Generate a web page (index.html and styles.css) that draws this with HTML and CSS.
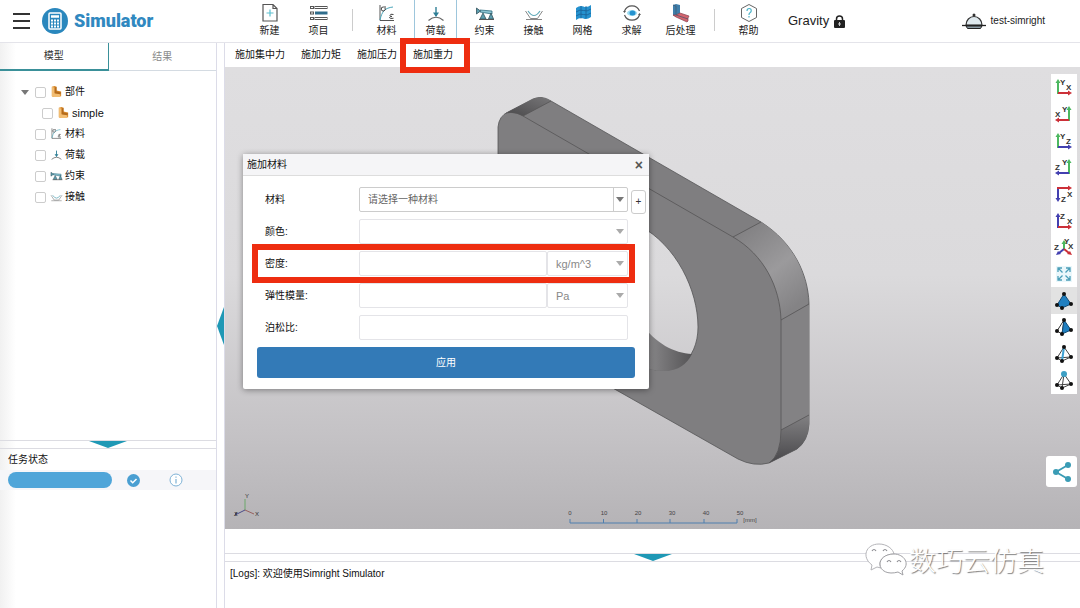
FILE: index.html
```html
<!DOCTYPE html>
<html lang="zh-CN">
<head>
    <meta charset="UTF-8">
    <meta name="viewport" content="width=device-width, initial-scale=1.0">
    <title>Simulator</title>
    <link rel="stylesheet" href="styles.css">
</head>
<body>
    <!-- shared icons -->
    <svg class="defs" width="0" height="0" aria-hidden="true">
        <symbol id="i-material" viewBox="0 0 20 20">
            <path d="M3 2v15.500h14" fill="none" stroke="#555" stroke-width="1"/>
            <path d="M3 17C5 8 8 5 16 4" fill="none" stroke="#4aa6ba" stroke-width="1"/>
            <path d="M9 4h-2.500a2 2 0 1 0 1.500 1M16.500 11.500q-3.500-1-3.500 1 0 1 2 1-2.500 0-2.500 1.200 0 1.500 4 .5" fill="none" stroke="#444" stroke-width="1"/>
        </symbol>
        <symbol id="i-load" viewBox="0 0 20 20">
            <path d="M2.500 17.500Q10 11 17.500 17.500" fill="none" stroke="#666" stroke-width="1.200"/>
            <path d="M10 4v9" stroke="#2f7f96" stroke-width="1.400"/>
            <path d="M7 9.500h6L10 14z" fill="#2f7f96"/>
        </symbol>
        <symbol id="i-fix" viewBox="0 0 20 20">
            <path d="M5 7l12 1v3L5 9z" fill="#8cc4d2" stroke="#2f6d80" stroke-width=".8"/>
            <path d="M1.500 5v6l4-3zM8 10l-3 6h6zM16 10l-2.500 6h5z" fill="#5c9fb0" stroke="#33525c" stroke-width=".8"/>
            <path d="M4 16.500h15" stroke="#555"/>
        </symbol>
        <symbol id="i-contact" viewBox="0 0 20 20">
            <path d="M4 8q6 9 12 0" fill="none" stroke="#5fa9b8" stroke-width="1.200"/>
            <path d="M1.500 8l5 7.500h7l5-7.500M2 16.500h16" fill="none" stroke="#888" stroke-width="1"/>
        </symbol>
        <symbol id="i-part" viewBox="0 0 14 14">
            <path d="M2 2l3-1 2 1v4l5 1v5l-8 1-2-1z" fill="#d98a2b"/>
            <path d="M2 2l3 1v6l6 1v3H4l-2-1z" fill="#f2bd72"/>
            <path d="M5 3l2-1v5l5 1-1 2-6-1z" fill="#b36b1d"/>
        </symbol>
    </svg>

    <header class="header">
        <button class="menu-btn" aria-label="菜单"><span></span><span></span><span></span></button>
        <a class="logo" href="#">
            <svg width="26" height="26" viewBox="0 0 26 26">
                <circle cx="13" cy="13" r="13" fill="#2a87bd"/>
                <rect x="7" y="5" width="12" height="16" rx="1" fill="#2a87bd" stroke="#fff" stroke-width="1.500"/>
                <path d="M9 8.500h8" stroke="#fff" stroke-width="2.500"/>
                <path d="M9 12.500h2m1 0h2m1 0h2M9 15.500h2m1 0h2m1 0h2M9 18.500h2m1 0h2m1 0h2" stroke="#fff" stroke-width="1.800"/>
            </svg>
            <span>Simulator</span>
        </a>
        <nav class="toolbar">
            <button class="tool">
                <svg width="20" height="20" viewBox="0 0 20 20"><path d="M3 1.500h10l4 4v12.500H3zM13 1.500v4h4" fill="#fff" stroke="#555" stroke-width="1.200"/><path d="M10 6.500v7M6.500 10h7" stroke="#5cc0d0" stroke-width="1.200"/></svg>
                <span>新建</span>
            </button>
            <button class="tool">
                <svg width="20" height="20" viewBox="0 0 20 20"><g fill="#fff" stroke="#555"><rect x="1.500" y="3.500" width="3" height="2"/><rect x="1.500" y="9" width="3" height="2"/><rect x="1.500" y="14.500" width="3" height="2"/><rect x="6" y="3.500" width="12" height="2"/><rect x="6" y="14.500" width="12" height="2"/></g><path d="M6 10h12.500" stroke="#2f6d8c" stroke-width="3"/></svg>
                <span>项目</span>
            </button>
            <i class="sep"></i>
            <button class="tool"><svg width="20" height="20"><use href="#i-material"/></svg><span>材料</span></button>
            <button class="tool active"><svg width="20" height="20"><use href="#i-load"/></svg><span>荷载</span></button>
            <button class="tool"><svg width="20" height="20"><use href="#i-fix"/></svg><span>约束</span></button>
            <button class="tool"><svg width="20" height="20"><use href="#i-contact"/></svg><span>接触</span></button>
            <button class="tool">
                <svg width="20" height="20" viewBox="0 0 20 20"><path d="M3 5q4-3 7.500-1.500T18 2v12q-4 3-7.500 1.500T3 17z" fill="#2592cf"/><path d="M3 9q4-3 7.500-1.500T18 6M3 13q4-3 7.500-1.500T18 10M8 3v12.500M13 3v12.500" fill="none" stroke="#1a5f94" stroke-width=".8"/></svg>
                <span>网格</span>
            </button>
            <button class="tool">
                <svg width="20" height="20" viewBox="0 0 20 20"><path d="M2.500 8a8 8 0 0 1 15 0M17.500 12a8 8 0 0 1-15 0" fill="none" stroke="#555" stroke-width="1.200"/><path d="M1 8h3l-1.500 2zM19 12h-3l1.500-2z" fill="#555"/><ellipse cx="10" cy="10" rx="5" ry="3" fill="#9fdcf0"/><ellipse cx="10.500" cy="10" rx="3" ry="2.500" fill="#2592cf"/></svg>
                <span>求解</span>
            </button>
            <button class="tool">
                <svg width="20" height="20" viewBox="0 0 20 20"><path d="M2 2l3-1 4 1v9l-4 3-3-2z" fill="#3f7fab"/><path d="M2 12l3 2 11 5 1-1v-3l1-2-9-3-4 2z" fill="#d2646e" stroke="#8b4450" stroke-width=".7"/><path d="M2 2l3 1v9l12 4" fill="none" stroke="#44566b" stroke-width=".7"/></svg>
                <span>后处理</span>
            </button>
            <i class="sep"></i>
            <button class="tool">
                <svg width="20" height="20" viewBox="0 0 20 20"><path d="M10 1.500l7.500 4v9l-7.500 4-7.500-4v-9z" fill="#fff" stroke="#666" stroke-width="1"/><path d="M8 8q0-2.500 2.200-2.500T12.200 8q0 1-1.200 1.700T10 12M10 13v1.500" fill="none" stroke="#4db3c8" stroke-width="1.200"/></svg>
                <span>帮助</span>
            </button>
        </nav>
        <div class="project">
            <span>Gravity</span>
            <svg width="11" height="13" viewBox="0 0 11 13"><path d="M2.500 6V4a3 3 0 0 1 6 0v2" fill="none" stroke="#222" stroke-width="1.500"/><rect x="0" y="5" width="11" height="8" rx="1" fill="#222"/><path d="M5.500 7v4M4 9h3" stroke="#ccc"/></svg>
        </div>
        <a class="user" href="#">
            <svg width="24" height="18" viewBox="0 0 24 18"><path d="M4 13a8 8.500 0 0 1 16 0z" fill="#dfe9ee" stroke="#333" stroke-width="1.200"/><circle cx="12" cy="3" r="1.500" fill="#333"/><path d="M0 13.500h24" stroke="#222" stroke-width="1.300"/><path d="M4 14h16l-1.500 2.500h-13z" fill="#8a9aa3" stroke="#222"/></svg>
            <span>test-simright</span>
        </a>
    </header>

    <div class="layout">
        <aside class="sidebar">
            <div class="tabs">
                <button class="tab current">模型</button>
                <button class="tab">结果</button>
            </div>
            <ul class="tree">
                <li><span class="caret"></span><input type="checkbox" id="t1"><label for="t1"><svg width="13" height="13"><use href="#i-part"/></svg>部件</label></li>
                <li class="child"><input type="checkbox" id="t2"><label for="t2"><svg width="13" height="13"><use href="#i-part"/></svg><span class="latin">simple</span></label></li>
                <li><input type="checkbox" id="t3"><label for="t3"><svg width="13" height="13"><use href="#i-material"/></svg>材料</label></li>
                <li><input type="checkbox" id="t4"><label for="t4"><svg width="13" height="13"><use href="#i-load"/></svg>荷载</label></li>
                <li><input type="checkbox" id="t5"><label for="t5"><svg width="13" height="13"><use href="#i-fix"/></svg>约束</label></li>
                <li><input type="checkbox" id="t6"><label for="t6"><svg width="13" height="13"><use href="#i-contact"/></svg>接触</label></li>
            </ul>
            <div class="h-split"><i></i></div>
            <section class="status">
                <h2>任务状态</h2>
                <div class="task">
                    <div class="bar"></div>
                    <svg width="13" height="13" viewBox="0 0 13 13"><circle cx="6.500" cy="6.500" r="6.500" fill="#4a9fd2"/><path d="M3.500 6.500l2.200 2.200L9.500 5" fill="none" stroke="#fff" stroke-width="1.500"/></svg>
                    <svg class="info" width="14" height="14" viewBox="0 0 14 14"><circle cx="7" cy="7" r="6" fill="#fff" stroke="#7fb2d6"/><path d="M7 6v4.500M7 3.500v1.300" stroke="#7fb2d6" stroke-width="1.200"/></svg>
                </div>
            </section>
        </aside>

        <div class="v-split"><i></i></div>

        <main class="main">
            <div class="subbar">
                <button>施加集中力</button>
                <button>施加力矩</button>
                <button>施加压力</button>
                <button class="marked">施加重力</button>
            </div>

            <div class="viewport">
                <svg class="scene" viewBox="225 67 855 462">
                    <defs>
                        <linearGradient id="round" x1="0" y1="0" x2="0.600" y2="1">
                            <stop offset="0" stop-color="#7c7b7d"/>
                            <stop offset=".6" stop-color="#9b9a9c"/>
                            <stop offset="1" stop-color="#848385"/>
                        </linearGradient>
                        <linearGradient id="corner" x1="0" y1="0" x2="0" y2="1">
                            <stop offset="0" stop-color="#828183"/>
                            <stop offset="1" stop-color="#48474a"/>
                        </linearGradient>
                        <linearGradient id="tip" x1="0" y1="1" x2="1" y2="0">
                            <stop offset="0" stop-color="#4b4a4c"/>
                            <stop offset="1" stop-color="#777678"/>
                        </linearGradient>
                        <linearGradient id="bore" x1="0" y1="0" x2="1" y2="0">
                            <stop offset="0" stop-color="#929193"/>
                            <stop offset="1" stop-color="#555456"/>
                        </linearGradient>
                    </defs>
                    <!-- plate: silhouette, then the shaded side faces -->
                    <path fill="#7f7e80" fill-rule="evenodd" stroke="#565557" stroke-width=".8" d="M498 200V127Q499 116 508 112L533 99Q542 95 551 101L761 222C794 243 808 275 809 303V424Q808 441 797 449L769 463Q754 467 738 459L498 323zM640 226C676 245 698 290 698 327C698 360 674 381 640 365z"/>
                    <path fill="url(#tip)" d="M508 112L533 99Q542 95 551 101L523 116Q515 112 508 113z"/>
                    <path fill="url(#round)" d="M733 237L761 222C794 243 808 275 808 304L781 320C780 287 764 255 733 237z"/>
                    <path fill="#838284" d="M781 320l28-16v111l-28 15z"/>
                    <path fill="url(#corner)" d="M781 430l28-15v10q-1 16-12 24l-28 14q12-8 12-33z"/>
                    <path fill="url(#bore)" d="M640 322C656 344 674 353 692 354Q684 370 666 371Q650 371 640 365z"/>
                    <path fill="none" stroke="#555456" stroke-width=".8" d="M506 113Q515 111 523 116L733 237C764 255 780 287 781 320V430Q781 455 769 463M523 116L551 101M733 237L761 222M781 320L809 304M781 430L809 415"/>
                    <!-- axis triad -->
                    <g class="triad" fill="none" stroke-width="1">
                        <path d="M245 510V499" stroke="#6aa86a"/>
                        <path d="M245 510l-8 4" stroke="#4a4a88"/>
                        <path d="M245 510l9 4" stroke="#98605e"/>
                        <circle cx="236" cy="514" r="1" fill="#22225a"/>
                        <text x="245" y="498">Y</text>
                        <text x="255" y="516">X</text>
                        <text x="234" y="516">Z</text>
                    </g>
                    <!-- ruler -->
                    <path d="M570 519v4h167v-4M603.500 519v4M637 519v4M670 519v4M704 519v4" fill="none" stroke="#4f7fae" stroke-width="1"/>
                    <g class="ruler">
                        <text x="570" y="515">0</text>
                        <text x="604" y="515">10</text>
                        <text x="638" y="515">20</text>
                        <text x="672" y="515">30</text>
                        <text x="706" y="515">40</text>
                        <text x="740" y="515">50</text>
                        <text x="750" y="522">[mm]</text>
                    </g>
                </svg>

                <form class="dialog">
                    <div class="dialog-title"><span>施加材料</span><button type="button" aria-label="关闭">×</button></div>
                    <div class="dialog-body">
                        <div class="row">
                            <label for="material">材料</label>
                            <div class="select split"><select id="material"><option>请选择一种材料</option></select></div>
                            <button type="button" class="plus" aria-label="添加">+</button>
                        </div>
                        <div class="row off">
                            <label for="color">颜色:</label>
                            <div class="select"><select id="color"><option></option></select></div>
                        </div>
                        <div class="row off marked">
                            <label for="density">密度:</label>
                            <div class="pair">
                                <input type="text" id="density">
                                <div class="select"><select aria-label="密度单位"><option>kg/m^3</option></select></div>
                            </div>
                        </div>
                        <div class="row off">
                            <label for="modulus">弹性模量:</label>
                            <div class="pair">
                                <input type="text" id="modulus">
                                <div class="select"><select aria-label="弹性模量单位"><option>Pa</option></select></div>
                            </div>
                        </div>
                        <div class="row off">
                            <label for="poisson">泊松比:</label>
                            <input type="text" id="poisson">
                        </div>
                        <button type="button" class="apply">应用</button>
                    </div>
                </form>

                <div class="view-tools">
                    <button aria-label="XY"><svg viewBox="0 0 20 20"><path class="g" d="M4 17V4"/><path class="gf" d="M1.500 6L4 2l2.500 4z"/><path class="r" d="M4 16h11"/><path class="rf" d="M14 13.500l4 2.500-4 2.500z"/><text x="6" y="8">Y</text><text x="12" y="13">X</text></svg></button>
                    <button aria-label="-XY"><svg viewBox="0 0 20 20"><path class="g" d="M15 17V4"/><path class="gf" d="M12.500 6L15 2l2.500 4z"/><path class="r" d="M15 16H4"/><path class="rf" d="M5 13.500L1 16l4 2.500z"/><text x="8" y="8">Y</text><text x="1" y="13">X</text></svg></button>
                    <button aria-label="ZY"><svg viewBox="0 0 20 20"><path class="g" d="M4 17V4"/><path class="gf" d="M1.500 6L4 2l2.500 4z"/><path class="b" d="M4 16h11"/><path class="bf" d="M14 13.500l4 2.500-4 2.500z"/><text x="6" y="8">Y</text><text x="12" y="13">Z</text></svg></button>
                    <button aria-label="-ZY"><svg viewBox="0 0 20 20"><path class="g" d="M15 17V4"/><path class="gf" d="M12.500 6L15 2l2.500 4z"/><path class="b" d="M15 16H4"/><path class="bf" d="M5 13.500L1 16l4 2.500z"/><text x="8" y="8">Y</text><text x="1" y="13">Z</text></svg></button>
                    <button aria-label="X-Z"><svg viewBox="0 0 20 20"><path class="b" d="M4 4v11"/><path class="bf" d="M1.500 14L4 18l2.500-4z"/><path class="r" d="M3 4h12"/><path class="rf" d="M14 1.500L18 4l-4 2.500z"/><text x="7" y="18">Z</text><text x="13" y="13">X</text></svg></button>
                    <button aria-label="XZ"><svg viewBox="0 0 20 20"><path class="b" d="M4 17V4"/><path class="bf" d="M1.500 6L4 2l2.500 4z"/><path class="r" d="M4 16h11"/><path class="rf" d="M14 13.500l4 2.500-4 2.500z"/><text x="6" y="8">Z</text><text x="13" y="13">X</text></svg></button>
                    <button aria-label="等轴测"><svg viewBox="0 0 20 20"><path class="g" d="M10 12V5"/><path class="gf" d="M7.500 7L10 3l2.500 4z"/><path class="b" d="M10 12l-5 4"/><path class="bf" d="M2 18l2-4 3 3z"/><path class="r" d="M10 12l5 4"/><path class="rf" d="M18 18l-2-4-3 3z"/><text x="10" y="7">Y</text><text x="0" y="13">Z</text><text x="14" y="12">X</text></svg></button>
                    <button aria-label="适应窗口"><svg viewBox="0 0 20 20"><rect x="2" y="2" width="16" height="16" fill="#eaf7fb"/><path d="M4 8V4h4M12 4h4v4M16 12v4h-4M8 16H4v-4M4 4l4.500 4.500M16 4l-4.500 4.500M16 16l-4.500-4.500M4 16l4.500-4.500" fill="none" stroke="#4c9fb8" stroke-width="1.300"/></svg></button>
                    <button class="on" aria-label="实体"><svg viewBox="0 0 20 20"><path d="M10 3L3 14l5 3 9-4z" fill="#1f7fc0" stroke="#124a73"/><g fill="#111"><circle cx="10" cy="3" r="2"/><circle cx="3" cy="14" r="2"/><circle cx="8" cy="17" r="2"/><circle cx="17" cy="13" r="2"/></g></svg></button>
                    <button aria-label="面"><svg viewBox="0 0 20 20"><path d="M10 3L3 14l5 3z" fill="#fff" stroke="#333"/><path d="M10 3L8 17l9-4z" fill="#1f7fc0" stroke="#124a73"/><g fill="#111"><circle cx="10" cy="3" r="2"/><circle cx="3" cy="14" r="2"/><circle cx="8" cy="17" r="2"/><circle cx="17" cy="13" r="2"/></g></svg></button>
                    <button aria-label="边"><svg viewBox="0 0 20 20"><path d="M10 3L3 14l5 3 9-4zM3 14l14-1" fill="none" stroke="#444"/><path d="M10 3L8 17" stroke="#3fa2d4" stroke-width="2"/><g fill="#111"><circle cx="10" cy="3" r="2"/><circle cx="3" cy="14" r="2"/><circle cx="8" cy="17" r="2"/><circle cx="17" cy="13" r="2"/></g></svg></button>
                    <button aria-label="点"><svg viewBox="0 0 20 20"><path d="M10 3L3 14l5 3 9-4zM3 14l14-1M10 3L8 17" fill="none" stroke="#444"/><circle cx="10" cy="3" r="3" fill="#3d9fc4"/><g fill="#111"><circle cx="3" cy="14" r="2"/><circle cx="8" cy="17" r="2"/><circle cx="17" cy="13" r="2"/></g></svg></button>
                </div>

                <button class="share" aria-label="分享"><svg width="20" height="20" viewBox="0 0 20 20"><path d="M16 3L4 10l12 7" fill="none" stroke="#3a9cb5" stroke-width="1.800"/><g fill="#3a9cb5"><circle cx="16" cy="3" r="3"/><circle cx="4" cy="10" r="3"/><circle cx="16" cy="17" r="3"/></g></svg></button>
            </div>

            <div class="spacer"></div>
            <div class="h-split"><i></i></div>
            <div class="logs">[Logs]: 欢迎使用Simright Simulator</div>
        </main>
    </div>

    <div class="watermark">
        <svg width="44" height="34" viewBox="0 0 44 34">
            <path d="M7 27l1-5C-3 14 2 1 15 1c8 0 14 5 15 10-10 0-17 7-13 14l-4-1z" fill="#fff" stroke="#b5b5b9"/>
            <path d="M39 32l-1-4c9-7 2-17-8-17-9 0-14 5-14 10 0 7 8 11 18 8z" fill="#fff" stroke="#a0a0a4"/>
            <path d="M8 8q2-3 4 0M19 8q2-3 4 0M23 19q2-3 4 0M33 19q2-3 4 0" fill="none" stroke="#8d8d92" stroke-width="1.200"/>
        </svg>
        <span>数巧云仿真</span>
    </div>
</body>
</html>
```
FILE: styles.css
```css
* {
    box-sizing: border-box;
}
body {
    margin: 0;
    height: 100vh;
    display: flex;
    flex-direction: column;
    overflow: hidden;
    background: #fff;
    color: #222;
    font: 10px/16px "Liberation Sans", "Noto Sans CJK SC", sans-serif;
}
button, input, select {
    font: inherit;
    color: inherit;
    margin: 0;
    padding: 0;
    border: 0;
    background: none;
}
button {
    cursor: pointer;
}
a {
    color: inherit;
    text-decoration: none;
}
.defs {
    position: absolute;
}

/* header */
.header {
    display: flex;
    align-items: center;
    height: 43px;
    border-bottom: 1px solid #e4e4ea;
}
.menu-btn {
    display: grid;
    gap: 5px;
    width: 17px;
    margin-left: 13px;
}
.menu-btn span {
    height: 2px;
    background: #333;
}
.logo {
    display: flex;
    align-items: center;
    gap: 6px;
    width: 206px;
    margin-left: 12px;
    color: #3088c0;
    font: 900 18px/26px Roboto, "Liberation Sans", sans-serif;
}
.toolbar {
    display: flex;
    gap: 6px;
    height: 42px;
}
.tool {
    display: flex;
    flex-direction: column;
    align-items: center;
    width: 43px;
    padding-top: 3px;
    color: #222;
    border: solid transparent;
    border-width: 0 1px;
}
.tool.active {
    border-color: #9dc6dc;
}
.sep {
    width: 1px;
    height: 22px;
    margin: 9px 6px 0;
    background: #ccc;
}
.project {
    display: flex;
    align-items: center;
    gap: 5px;
    margin-left: 18px;
    font-size: 13px;
}
.user {
    display: flex;
    align-items: center;
    gap: 5px;
    margin: 0 35px 0 auto;
}

/* columns */
.layout {
    flex: 1;
    display: flex;
    min-height: 0;
}
.sidebar {
    display: flex;
    flex-direction: column;
    width: 217px;
    border-right: 1px solid #dcdce8;
    background: linear-gradient(to right, #f1f1f1, #fff 16px);
}
.tabs {
    display: flex;
    height: 28px;
}
.tab {
    flex: 1;
    color: #888;
    border-bottom: 1px solid #d4dbe2;
}
.tab.current {
    color: #333;
    border-right: 1px solid #3a9099;
    border-bottom: 2px solid #3a9099;
}
.tree {
    flex: 1;
    margin: 0;
    padding: 10px 0 0 20px;
    list-style: none;
}
.tree li {
    display: flex;
    align-items: center;
    height: 21px;
    padding-left: 15px;
}
.tree li.child {
    padding-left: 22px;
}
.tree label {
    display: flex;
    align-items: center;
    gap: 2px;
    color: #111;
}
.tree input {
    appearance: none;
    width: 11px;
    height: 11px;
    margin: 2px 4px 0 0;
    border: 1px solid #ccc;
    border-radius: 2px;
    background: #fff;
}
.caret {
    margin: 2px 7px 0 -14px;
    border: 4px solid transparent;
    border-top: 5px solid #777;
    border-bottom: 0;
}
.caret + input {
    margin-left: -1px;
}
.latin {
    font-size: 11px;
}
.h-split {
    height: 9px;
    border: solid #dcdce2;
    border-width: 1px 0;
}
.h-split i {
    display: block;
    width: 0;
    margin: auto;
    border: 19px solid transparent;
    border-top: 7px solid #1f98b5;
    border-bottom: 0;
}
.status {
    height: 159px;
}
.status h2 {
    margin: 0;
    padding: 3px 8px 2px;
    font-size: 10px;
    font-weight: normal;
    color: #111;
}
.task {
    display: flex;
    align-items: center;
    height: 20px;
    padding-left: 8px;
    background: #f6f6f9;
}
.bar {
    width: 104px;
    height: 16px;
    margin-right: 15px;
    border-radius: 8px;
    background: #4fa5d9;
}
.info {
    margin-left: 29px;
}
.v-split {
    display: flex;
    align-items: center;
    width: 7px;
}
.v-split i {
    border: 19px solid transparent;
    border-right: 7px solid #1f98b5;
    border-left: 0;
}

/* main area */
.main {
    flex: 1;
    display: flex;
    flex-direction: column;
    min-width: 0;
    border-left: 1px solid #dcdce8;
}
.subbar {
    display: flex;
    gap: 16px;
    height: 24px;
    padding-left: 10px;
    color: #111;
}
.subbar .marked {
    position: relative;
}
.marked::after {
    content: "";
    position: absolute;
    z-index: 2;
    border: 6px solid #ee2d10;
    pointer-events: none;
}
.subbar .marked::after {
    inset: -5px -17px -6px -13px;
}
.viewport {
    flex: 1;
    position: relative;
    min-height: 0;
    background: linear-gradient(#dfdee0, #dbdadc 45%, #c4c2c5 80%, #b5b3b6);
}
.scene {
    display: block;
    width: 100%;
    height: 100%;
}
.ruler text {
    font-size: 6px;
    text-anchor: middle;
    fill: #444;
}
.triad text {
    font-size: 6px;
    fill: #333;
}

/* material dialog */
.dialog {
    position: absolute;
    top: 87px;
    left: 18px;
    width: 406px;
    border-radius: 2px;
    background: #fff;
    box-shadow: 0 1px 6px rgba(0, 0, 0, 0.4);
}
.dialog-title {
    display: flex;
    justify-content: space-between;
    align-items: center;
    height: 22px;
    padding: 0 6px 0 4px;
    border-bottom: 1px solid #ddd;
    background: #f5f5f7;
    color: #111;
}
.dialog-title button {
    color: #555;
    font-size: 14px;
    font-weight: bold;
}
.dialog-body {
    display: grid;
    grid-template-columns: minmax(0, 1fr);
    gap: 7px;
    padding: 11px 14px;
}
.row {
    position: relative;
    display: grid;
    grid-template: 25px / 94px 269px 18px;
    align-items: center;
    margin-left: 8px;
}
.row label {
    color: #111;
}
.row.marked::after {
    inset: -7px 0 -7px -13px;
}
.row input,
.row select {
    display: block;
    width: 100%;
    height: 25px;
    padding: 0 8px;
    border: 1px solid #ccc;
    border-radius: 2px;
    background: #fff;
    appearance: none;
    color: #666;
}
.row.off input,
.row.off select {
    border-color: #e4e4e8;
    color: #888;
    font-size: 11px;
}
.select {
    position: relative;
}
.select::after {
    content: "";
    position: absolute;
    top: 10px;
    right: 4px;
    border: 4px solid transparent;
    border-top: 5px solid #777;
    border-bottom: 0;
}
.off .select::after {
    border-top-color: #aaa;
}
.split::before {
    content: "";
    position: absolute;
    top: 1px;
    right: 14px;
    bottom: 1px;
    border-left: 1px solid #ccc;
}
.pair {
    display: grid;
    grid-template-columns: 1fr 81px;
}
.plus {
    align-self: start;
    height: 24px;
    margin: 3px 0 0 3px;
    border: 1px solid #ccc;
    border-radius: 3px;
    color: #333;
}
.apply {
    height: 31px;
    border-radius: 3px;
    background: #337ab7;
    color: #fff;
}

/* right hand tools */
.view-tools {
    position: absolute;
    top: 7px;
    right: 3px;
    display: grid;
    grid-template-rows: repeat(12, 1fr);
    width: 26px;
    height: 320px;
    background: #fff;
}
.view-tools button {
    display: grid;
    place-items: center;
}
.view-tools .on {
    background: #e2e2e2;
}
.view-tools svg {
    width: 20px;
    height: 20px;
}
.view-tools text {
    font-size: 8px;
    font-weight: bold;
    fill: #333;
}
.r, .g, .b {
    fill: none;
    stroke-width: 2;
}
.r { stroke: #cc3038; }
.g { stroke: #4cb860; }
.b { stroke: #4340b0; }
.rf { fill: #cc3038; }
.gf { fill: #4cb860; }
.bf { fill: #4340b0; }
.share {
    position: absolute;
    right: 3px;
    bottom: 42px;
    display: grid;
    place-items: center;
    width: 31px;
    height: 31px;
    border-radius: 3px;
    background: #fff;
}

/* log panel */
.spacer {
    height: 24px;
}
.logs {
    height: 46px;
    padding: 4px 5px;
    color: #111;
}
.watermark {
    position: absolute;
    right: 36px;
    bottom: 30px;
    display: flex;
    align-items: center;
    gap: 1px;
    color: #fff;
    font: 300 27px/36px "Noto Sans CJK SC", sans-serif;
    text-shadow: 1px 1px 1px rgba(0, 0, 0, 0.5);
}
```
